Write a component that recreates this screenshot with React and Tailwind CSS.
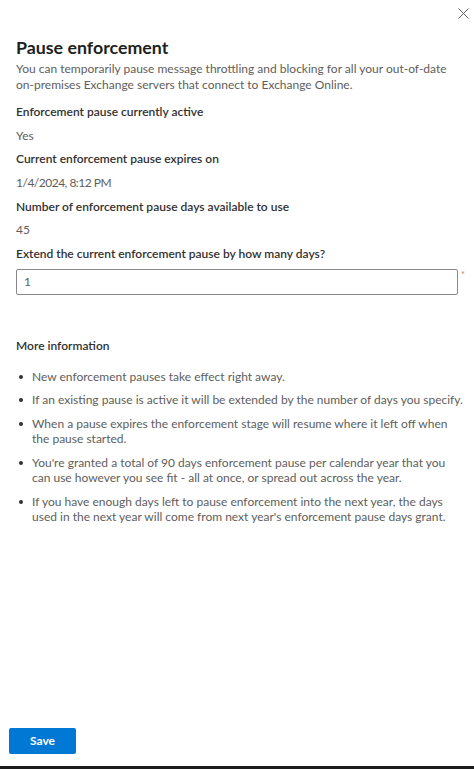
import React from "react";

const font = { fontFamily: 'Lato, "Open Sans", sans-serif' };

function Field({ label, value, valueClass = "" }) {
  return (
    <>
      <div className="text-[12px] leading-[16px] font-semibold text-[#323130] whitespace-nowrap">{label}</div>
      {value !== undefined && (
        <div className={"text-[12px] leading-[16px] text-[#605e5c] whitespace-nowrap " + valueClass}>{value}</div>
      )}
    </>
  );
}

function Bullet({ lines }) {
  return (
    <li className="flex items-start">
      <span className="w-[16px] shrink-0 pt-[6px]">
        <span className="block w-[4px] h-[4px] rounded-full bg-[#323130] ml-[3px]" />
      </span>
      <span className="text-[12px] leading-[15.5px] text-[#605e5c]">
        {lines.map((l, i) => (
          <span key={i} className="block whitespace-nowrap">{l}</span>
        ))}
      </span>
    </li>
  );
}

export default function App() {
  return (
    <div className="w-full h-[769px] bg-white flex flex-col overflow-hidden" style={font}>
      <div className="flex justify-end pt-[8px] pr-[5px] h-[35px]">
        <svg width="11" height="11" viewBox="0 0 11 11">
          <path d="M0.5 0.5 L10.5 10.5 M10.5 0.5 L0.5 10.5" stroke="#605e5c" strokeWidth="1" fill="none" />
        </svg>
      </div>
      <div className="flex-1 px-4">
        <h1 className="text-[17.8px] leading-[24px] font-bold text-[#201f1e]">Pause enforcement</h1>
        <p className="mt-[2px] text-[12px] leading-[16px] text-[#605e5c]">
          <span className="block whitespace-nowrap">You can temporarily pause message throttling and blocking for all your out-of-date</span>
          <span className="block whitespace-nowrap">on-premises Exchange servers that connect to Exchange Online.</span>
        </p>
        <div className="mt-[11px] flex flex-col gap-[7.67px]">
          <Field label="Enforcement pause currently active" value="Yes" />
          <Field label="Current enforcement pause expires on" value="1/4/2024, 8:12 PM" valueClass="tracking-[-0.5px]" />
          <Field label="Number of enforcement pause days available to use" value="45" />
          <Field label="Extend the current enforcement pause by how many days?" />
        </div>
        <div className="mt-[7px] flex items-start -mr-[13px]">
          <div className="flex-1 h-[26px] border border-[#8a8886] rounded-[2px] px-[7px] flex items-center text-[12px] text-[#605e5c]">
            1
          </div>
          <span className="w-[13px] pl-[3px] text-[9px] leading-[9px] text-[#c4796f] mt-[1px]">*</span>
        </div>
        <div className="mt-[43px] text-[12px] leading-[16px] font-semibold text-[#323130]">More information</div>
        <ul className="mt-[15px] flex flex-col gap-[8px]">
          <Bullet lines={["New enforcement pauses take effect right away."]} />
          <Bullet lines={["If an existing pause is active it will be extended by the number of days you specify."]} />
          <Bullet lines={["When a pause expires the enforcement stage will resume where it left off when", "the pause started."]} />
          <Bullet lines={["You're granted a total of 90 days enforcement pause per calendar year that you", "can use however you see fit - all at once, or spread out across the year."]} />
          <Bullet lines={["If you have enough days left to pause enforcement into the next year, the days", "used in the next year will come from next year's enforcement pause days grant."]} />
        </ul>
      </div>
      <div className="px-[9px] pb-[12px]">
        <button className="w-[67px] h-[26px] bg-[#0078d4] rounded-[2px] text-white text-[12px] font-bold">Save</button>
      </div>
      <div className="h-[3px] bg-[#1b1b1b]" />
    </div>
  );
}
